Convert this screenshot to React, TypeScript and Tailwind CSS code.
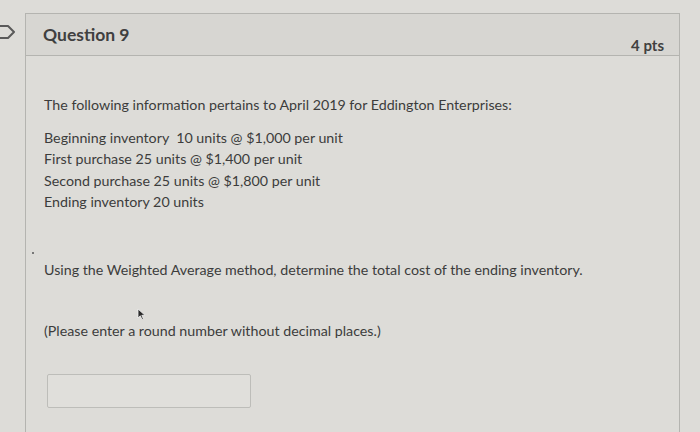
import React from 'react';

const Cursor: React.FC = () => (
  <svg className="absolute left-[137px] top-[308px]" width="9" height="13" viewBox="0 0 9 13">
    <path d="M1 1 L1 10 L3.3 7.8 L5 11.5 L6.4 10.9 L4.8 7.3 L8 7.3 Z" fill="#2a2a2a" stroke="#f2f2f2" strokeWidth="0.8" />
  </svg>
);

const App: React.FC = () => {
  return (
    <div
      className="relative w-[700px] h-[432px] overflow-hidden bg-[#dddcd8] text-[#3d3d3d]"
      style={{ fontFamily: 'Lato, "Open Sans", sans-serif' }}
    >
      {/* flag icon cut at the left edge */}
      <svg className="absolute left-[-4px] top-[24px]" width="22" height="16" viewBox="0 0 22 16">
        <path d="M1 2 H12 L18 8 L12 14 H1" fill="none" stroke="#5a5a5a" strokeWidth="2" strokeLinejoin="round" />
      </svg>

      <div className="ml-[25px] mt-[13px] w-[655px] border border-[#b4b4b0] h-[440px]">
        <div className="flex justify-between h-[42px] bg-[#d7d6d2] border-b border-[#b4b4b0] pl-[17px] pr-[15px]">
          <h2 className="text-[17.5px] font-bold leading-none pt-[12px] text-[#404040]">Question 9</h2>
          <span className="text-[15px] font-bold leading-none pt-[24px] text-[#404040]">4 pts</span>
        </div>

        <div className="pl-[18px] pt-[38px] text-[14.25px] leading-[21.5px] text-[#3c3c3c]">
          <p>The following information pertains to April 2019 for Eddington Enterprises:</p>
          <div className="mt-[11px]">
            <p>Beginning inventory&nbsp; 10 units @ $1,000 per unit</p>
            <p>First purchase 25 units @ $1,400 per unit</p>
            <p>Second purchase 25 units @ $1,800 per unit</p>
            <p>Ending inventory 20 units</p>
          </div>
          <p className="mt-[46px]">Using the Weighted Average method, determine the total cost of the ending inventory.</p>
          <p className="mt-[40px]">(Please enter a round number without decimal places.)</p>
          <div className="mt-[32px] ml-[3px] w-[204px] h-[34px] border border-[#bdbdb9] rounded-[2px] bg-[#e0dfdb]" />
        </div>
      </div>

      <span className="absolute left-[32px] top-[252px] w-[2px] h-[2px] bg-[#777]" />
      <Cursor />
    </div>
  );
};

export default App;
